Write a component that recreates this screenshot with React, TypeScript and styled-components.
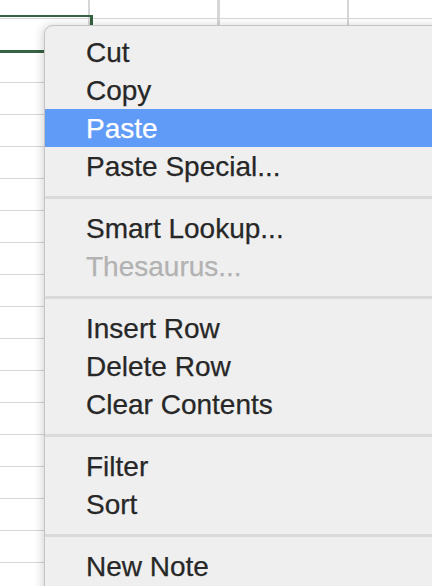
import React from "react";
import styled, { createGlobalStyle } from "styled-components";

const Global = createGlobalStyle`
  html, body {
    margin: 0;
    padding: 0;
    width: 432px;
    height: 586px;
    overflow: hidden;
    background: #ffffff;
  }
`;

const Sheet = styled.div`
  position: relative;
  width: 432px;
  height: 586px;
  overflow: hidden;
  background-color: #ffffff;
  background-image:
    repeating-linear-gradient(
      to bottom,
      transparent 0,
      transparent 18px,
      #d6d6d6 18px,
      #d6d6d6 19px,
      transparent 19px,
      transparent 32px
    ),
    repeating-linear-gradient(
      to right,
      transparent 0,
      transparent 88px,
      #d6d6d6 88px,
      #d6d6d6 90px,
      transparent 90px,
      transparent 129.5px
    );
`;

const Selection = styled.div`
  position: absolute;
  left: -4px;
  top: 15px;
  width: 92px;
  height: 33px;
  border: 2px solid #356240;
  border-right-width: 3px;
  border-bottom-width: 3px;
`;

const Menu = styled.div`
  position: absolute;
  left: 44px;
  top: 25px;
  width: 420px;
  height: 600px;
  box-sizing: border-box;
  padding-top: 7px;
  background: #efefef;
  border: 1px solid #c4c4c4;
  border-top-left-radius: 9px;
  box-shadow: -2px 0 8px rgba(0, 0, 0, 0.16);
  display: flex;
  flex-direction: column;
  font-family: "Liberation Sans", Arial, Helvetica, sans-serif;
`;

const Item = styled.div<{ $active?: boolean; $disabled?: boolean }>`
  height: 38px;
  line-height: 39px;
  padding-left: 41px;
  font-size: 28px;
  white-space: nowrap;
  -webkit-text-stroke: 0.25px currentColor;
  color: ${(p) => (p.$active ? "#ffffff" : p.$disabled ? "#b2b2b2" : "#272727")};
  background: ${(p) => (p.$active ? "#619bf8" : "transparent")};
`;

const Separator = styled.div`
  height: 3px;
  margin: 11px 0 10px;
  background: #dadada;
`;

type Entry = { label?: string; active?: boolean; disabled?: boolean; sep?: boolean };

const entries: Entry[] = [
  { label: "Cut" },
  { label: "Copy" },
  { label: "Paste", active: true },
  { label: "Paste Special..." },
  { sep: true },
  { label: "Smart Lookup..." },
  { label: "Thesaurus...", disabled: true },
  { sep: true },
  { label: "Insert Row" },
  { label: "Delete Row" },
  { label: "Clear Contents" },
  { sep: true },
  { label: "Filter" },
  { label: "Sort" },
  { sep: true },
  { label: "New Note" },
];

export default function App() {
  return (
    <>
      <Global />
      <Sheet>
        <Selection />
        <Menu>
          {entries.map((e, i) =>
            e.sep ? (
              <Separator key={i} />
            ) : (
              <Item key={i} $active={e.active} $disabled={e.disabled}>
                {e.label}
              </Item>
            )
          )}
        </Menu>
      </Sheet>
    </>
  );
}
